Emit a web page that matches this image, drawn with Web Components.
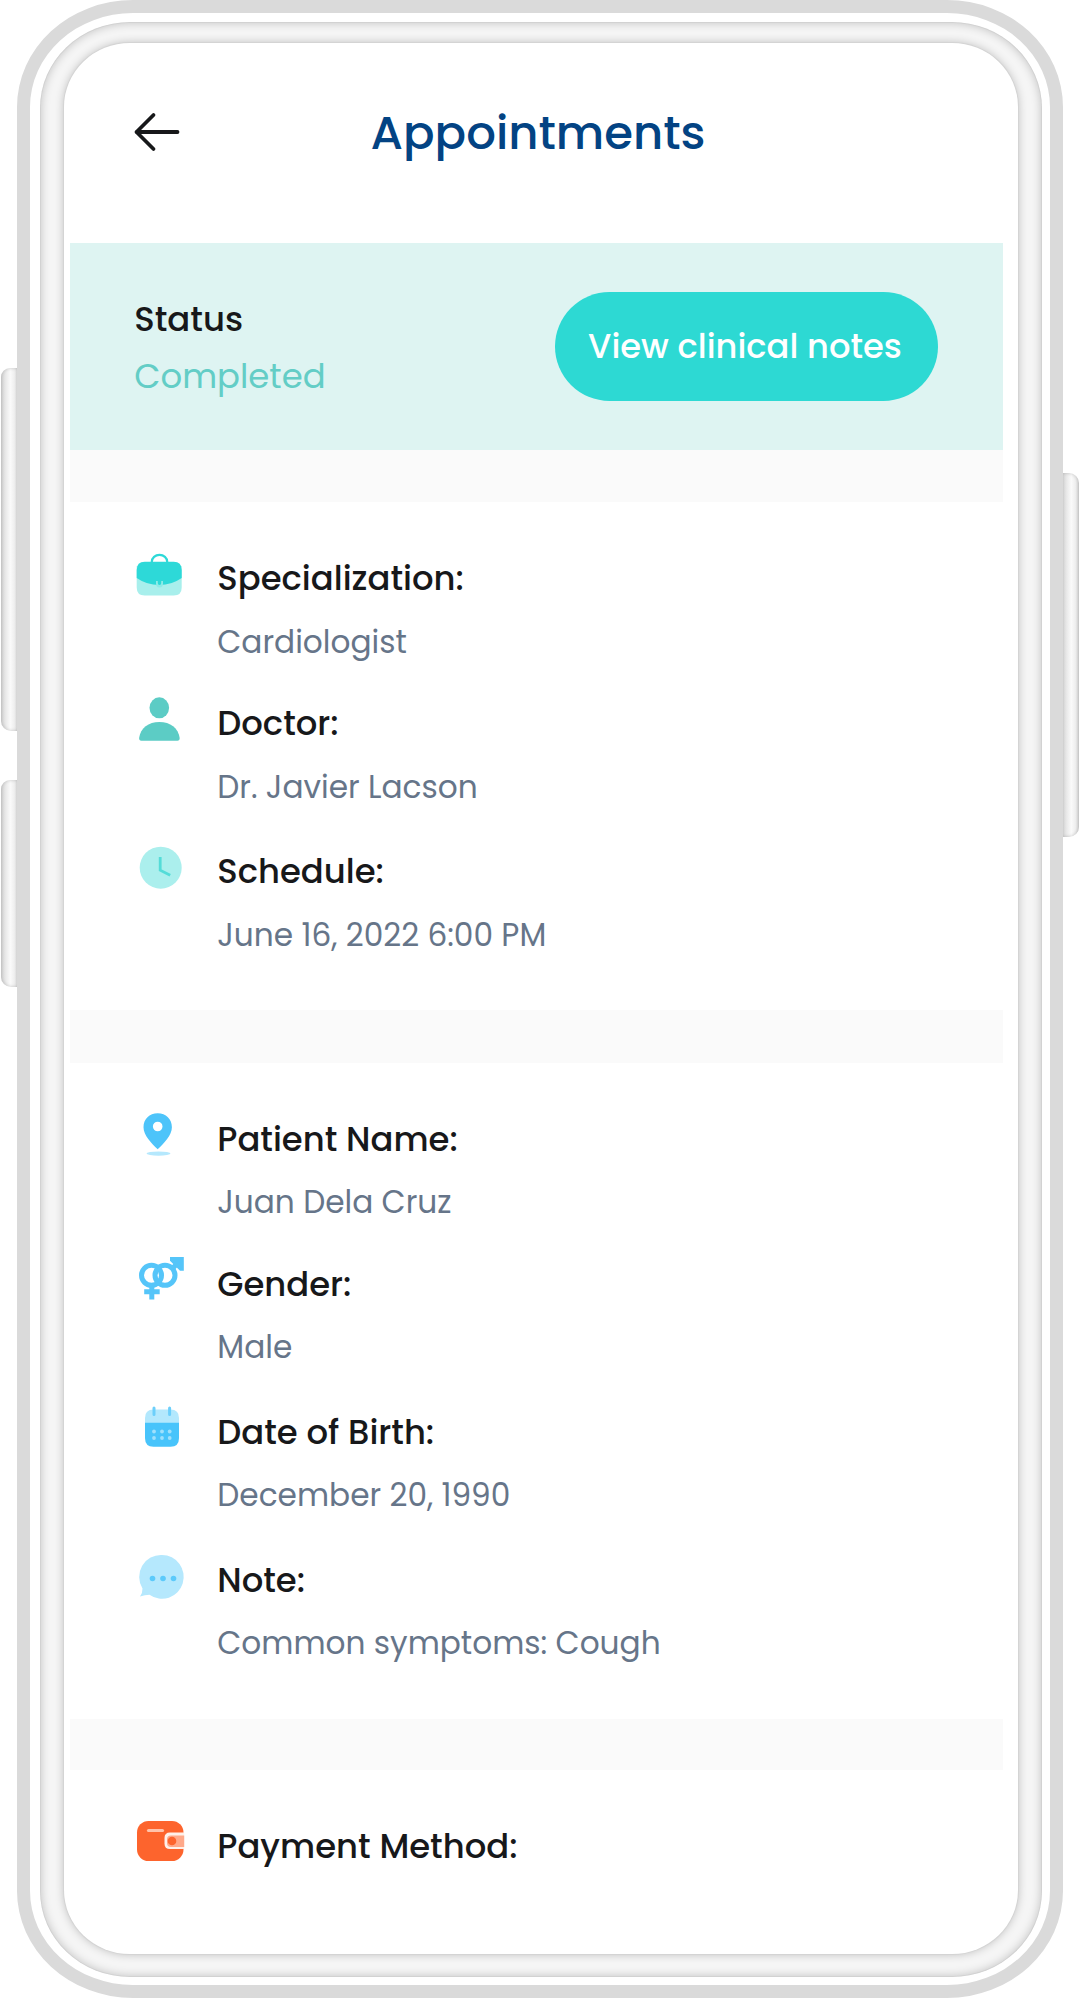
<!DOCTYPE html>
<html lang="en">
<head>
<meta charset="utf-8">
<title>Appointments</title>
<style>
  html, body { margin: 0; background: #fff; }
  body { font-family: Poppins, Inter, "Liberation Sans", sans-serif; color: #17181a; }
</style>
</head>
<body>
<phone-frame>
  <top-bar><span slot="title">Appointments</span></top-bar>
  <status-banner>
    <span slot="label">Status</span>
    <span slot="value">Completed</span>
    <span slot="action">View clinical notes</span>
  </status-banner>
  <section-gap style="height:52px"></section-gap>
  <info-section style="height:507.5px">
    <info-row icon="bag"><span slot="label">Specialization:</span><span slot="value">Cardiologist</span></info-row>
    <info-row icon="person" style="margin-top:41.5px"><span slot="label">Doctor:</span><span slot="value">Dr. Javier Lacson</span></info-row>
    <info-row icon="clock" style="margin-top:44px"><span slot="label">Schedule:</span><span slot="value">June 16, 2022 6:00 PM</span></info-row>
  </info-section>
  <section-gap style="height:53px"></section-gap>
  <info-section style="height:656px">
    <info-row icon="pin"><span slot="label">Patient Name:</span><span slot="value">Juan Dela Cruz</span></info-row>
    <info-row icon="gender" style="margin-top:41.3px"><span slot="label">Gender:</span><span slot="value">Male</span></info-row>
    <info-row icon="calendar" style="margin-top:44.3px"><span slot="label">Date of Birth:</span><span slot="value">December 20, 1990</span></info-row>
    <info-row icon="note" style="margin-top:44.3px"><span slot="label">Note:</span><span slot="value">Common symptoms: Cough</span></info-row>
  </info-section>
  <section-gap style="height:51.5px"></section-gap>
  <info-section>
    <info-row icon="wallet"><span slot="label">Payment Method:</span></info-row>
  </info-section>
</phone-frame>

<script>
const define = (name, html, setup) => customElements.define(name, class extends HTMLElement {
  connectedCallback() {
    if (this.shadowRoot) return;
    this.attachShadow({ mode: 'open' }).innerHTML = html;
    if (setup) setup(this);
  }
});

define('phone-frame', `
<style>
  :host { display: block; position: relative; width: 1080px; height: 1999px; overflow: hidden; background: #fff; }
  * { box-sizing: border-box; }
  .outer { position: relative; width: 1046px; height: 1998px; margin-left: 17px; padding: 8.5px 8px 8.5px 9.5px; border: 13px solid #dadada; border-radius: 116px / 107px; background: #fff; }
  .bezel { height: 100%; padding: 21.5px 24.5px 23px; border-radius: 90px / 86px; background: #f5f5f5;
    box-shadow: inset 0 0 10px 1px rgba(0,0,0,.2), inset 0 0 0 1px rgba(0,0,0,.04); }
  .screen { height: 100%; padding: 0 14.5px 0 6px; border-radius: 66px / 64px; background: #fff; overflow: hidden;
    box-shadow: 0 0 0 1px #d4d4d4, 0 0 10px 0 rgba(0,0,0,.24); }
  .key { position: absolute; width: 17px; background: linear-gradient(90deg, #d5d5d5, #eee 35%, #fafafa 55%, #eee 80%, #d8d8d8); box-shadow: inset 0 0 3px 1px rgba(0,0,0,.12); }
  .l { left: 1px; border-radius: 9px 0 0 10px; }
  .r { left: 1062px; border-radius: 0 10px 10px 0; }
</style>
<div class="key l" style="top:368px;height:363px"></div>
<div class="key l" style="top:779.5px;height:207px"></div>
<div class="key r" style="top:472.5px;height:364.5px"></div>
<div class="outer"><div class="bezel"><div class="screen"><slot></slot></div></div></div>`);

define('top-bar', `
<style>
  :host { display: flex; height: 199.5px; box-sizing: border-box; padding: 60.3px 0 0 62px; }
  svg { width: 50px; height: 50px; margin-top: 3.4px; flex: none; }
  .title { margin-left: 188.5px; font-size: 46.6px; font-weight: 500; line-height: 60px; color: #034383; }
</style>
<svg viewBox="0 0 50 50" fill="none" stroke="#17181a" stroke-width="3.8" stroke-linecap="round" stroke-linejoin="round"><path d="M45.5 25H4.5M21.5 8L4.5 25L21.5 42"/></svg>
<div class="title"><slot name="title"></slot></div>`);

define('status-banner', `
<style>
  :host { display: flex; justify-content: space-between; align-items: flex-start; height: 207.5px; box-sizing: border-box; padding: 49px 65px 0 64.3px; background: #def4f2; }
  .state { display: flex; flex-direction: column; gap: 16.7px; padding-top: 7.9px; font-size: 33.9px; line-height: 40px; }
  .label { font-weight: 500; }
  .value { color: #63cdc6; }
  button { display: flex; align-items: center; width: 383px; height: 109px; padding: 1.5px 0 0 33px; border: 0; border-radius: 55px; background: #2dd9d3; color: #fff; font: 500 33.7px/40px Poppins, Inter, "Liberation Sans", sans-serif; white-space: nowrap; }
</style>
<div class="state"><div class="label"><slot name="label"></slot></div><div class="value"><slot name="value"></slot></div></div>
<button><slot name="action"></slot></button>`);

define('section-gap', `<style>:host { display: block; background: #fafafa; }</style>`);

define('info-section', `<style>:host { display: flex; flex-direction: column; box-sizing: border-box; padding: 56.1px 0 0 65px; }</style><slot></slot>`);

const icons = {
  bag: '<path d="M1.7 16h45v21.500q0 8-8 8h-29q-8 0-8-8z" fill="#a8efec"/><path d="M16.8 13v-1.2a7.7 7 0 0 1 15.4 0V13" fill="none" stroke="#2dd9d8" stroke-width="2.2"/><path d="M1.7 20q0-8.3 8-8.3h29q8 0 8 8.3v8q-10 7-22.5 7t-22.5-7z" fill="#2dd9d8"/><path d="M21 31h7v2.5a3.5 4 0 0 1-7 0z" fill="#8debe7"/><path d="M22.8 30h3.4v3a1.7 2 0 0 1-3.4 0z" fill="#2dd9d8"/>',
  person: '<ellipse cx="24.3" cy="12.8" rx="9.8" ry="10.5" fill="#5cccc5"/><path d="M6.3 45.7q-2.2 0-2.2-2.7C5.5 33 13.5 27 24.4 27S43.3 33 44.7 43q0 2.7-2.2 2.7z" fill="#5cccc5"/>',
  clock: '<circle cx="25.7" cy="24.7" r="21" fill="#abefed"/><path d="M25.2 14v13.2l10 5" fill="none" stroke="#54dcd8" stroke-width="2.8"/>',
  pin: '<path fill-rule="evenodd" d="M22.7 2.3c8.3 0 14.2 5.8 14.2 14 0 8-8 16.2-14.2 21.9C16.5 32.5 8.5 24.3 8.5 16.3c0-8.2 5.9-14 14.2-14zM22.7 10.7a4.8 4.8 0 1 0 0 9.6 4.8 4.8 0 1 0 0-9.6z" fill="#4dc4fa"/><ellipse cx="23.5" cy="42.6" rx="12" ry="2.1" fill="#b5e8fd"/>',
  gender: '<g fill="none" stroke="#55c5f9" stroke-width="5"><circle cx="16.5" cy="19.3" r="10"/><circle cx="30" cy="19.3" r="10"/><path d="M16.8 31v12.5M9.2 35.7h15.5M37.5 12.5l7-7.5"/></g><path d="M35 1h13.8v13.8h-3.8l-10-10z" fill="#55c5f9"/>',
  calendar: '<path d="M10 19v-5q0-8.5 8.5-8.5h17q8.5 0 8.5 8.5v5z" fill="#b3e8fd"/><path d="M10 18.7h34V34q0 8.7-8.5 8.7h-17Q10 42.700 10 34z" fill="#48c4fb"/><path d="M19 4v6.5M34.6 4v6.5" stroke="#6ccffb" stroke-width="3" stroke-linecap="round"/><g fill="#9fe0fc"><circle cx="19" cy="27.5" r="1.9"/><circle cx="27" cy="27.5" r="1.9"/><circle cx="34.7" cy="27.5" r="1.9"/><circle cx="19" cy="34" r="1.9"/><circle cx="27" cy="34" r="1.9"/><circle cx="34.7" cy="34" r="1.9"/></g>',
  note: '<path d="M27 3a21.7 21.9 0 1 1-12.5 39.8q-4.5.2-9.5 1.7 2.7-4 2.5-8A21.7 21.9 0 0 1 27 3z" fill="#b5e8fd"/><g fill="#5ccafb"><circle cx="17.5" cy="26.5" r="2.8"/><circle cx="28" cy="26.5" r="2.8"/><circle cx="38.5" cy="26.5" r="2.8"/></g>',
  wallet: '<rect x="2" y="3" width="46.5" height="40" rx="11.5" fill="#fd642d"/><path d="M13.5 12.5h14" stroke="#ffc3ab" stroke-width="3.2" stroke-linecap="round"/><path d="M49.2 14.5H35q-5.5 0-5.5 5.5v5.500q0 5.5 5.5 5.5h14.2z" fill="#fff0e9"/><path d="M49.2 17.5H36q-4 0-4 4v3.5q0 4 4 4h13.2z" fill="#ffa98a"/><circle cx="37" cy="23" r="4.3" fill="#fd642d"/>'
};

define('info-row', `
<style>
  :host { display: flex; white-space: nowrap; }
  svg { flex: none; width: 50px; height: 50px; margin: -7.8px 32.3px 0 0; overflow: visible; }
  .text { display: flex; flex-direction: column; gap: 23.7px; line-height: 40px; }
  .label { height: 40px; font-size: 33.85px; font-weight: 500; }
  .value { height: 40px; font-size: 31.2px; color: #667589; }
</style>
<svg viewBox="0 0 50 50"></svg>
<div class="text"><div class="label"><slot name="label"></slot></div><div class="value"><slot name="value"></slot></div></div>`,
  el => { el.shadowRoot.querySelector('svg').innerHTML = icons[el.getAttribute('icon')]; });
</script>
</body>
</html>
